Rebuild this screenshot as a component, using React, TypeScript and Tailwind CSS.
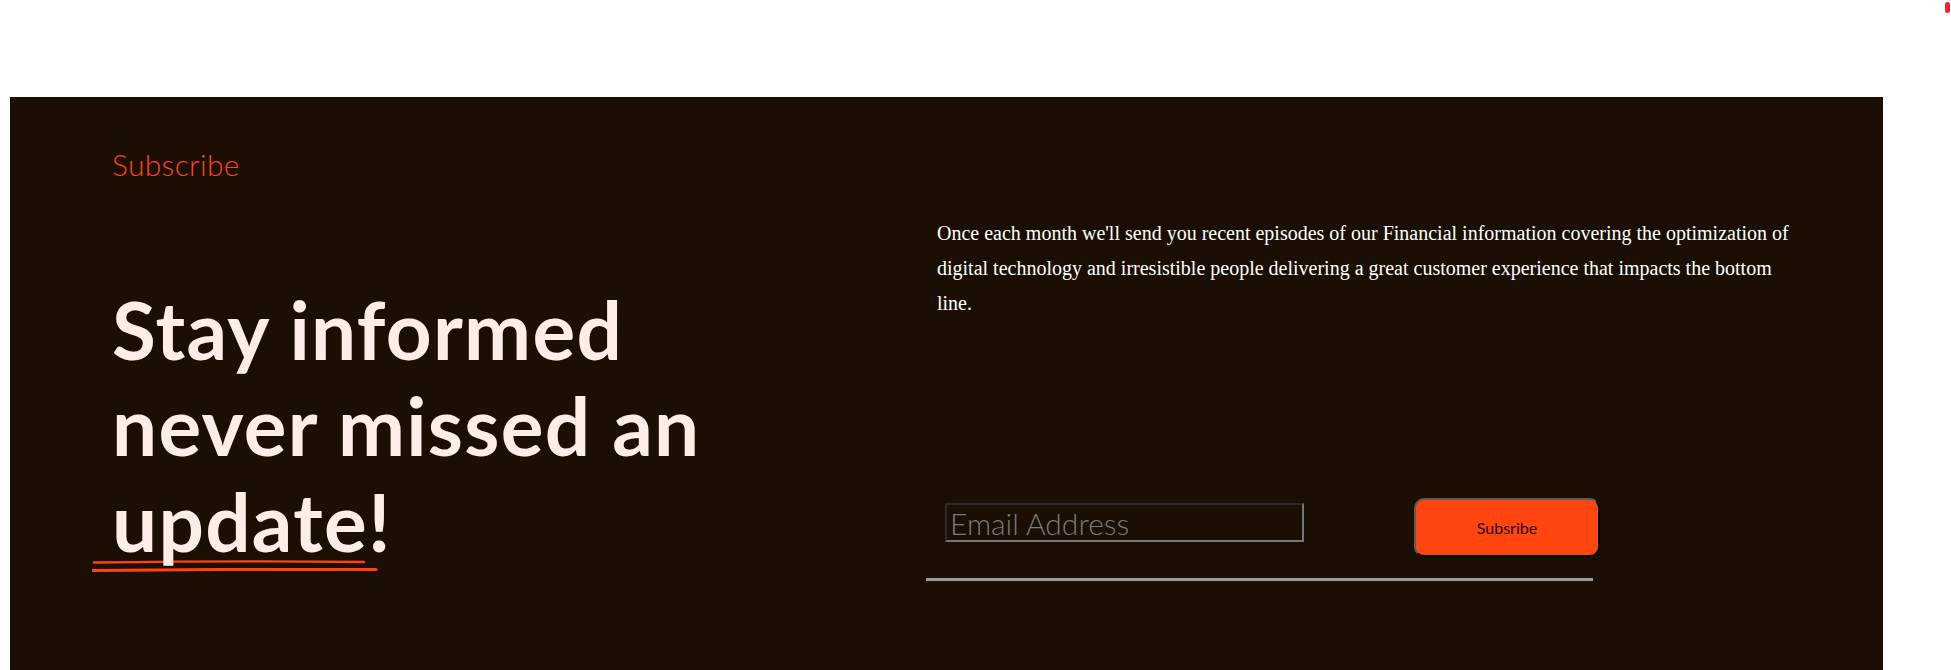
import React from "react";

const Underline = () => (
  <svg
    className="absolute left-[-20px] top-[86px] w-[290px] h-[16px] -z-10"
    viewBox="0 0 290 16"
    fill="none"
  >
    <path d="M2 3.5 C 80 2.5, 190 2, 272 3" stroke="#ff4410" strokeWidth="2.4" strokeLinecap="round" />
    <path d="M1 11.5 C 90 10.5, 200 10, 284 10.5" stroke="#ff4410" strokeWidth="3.2" strokeLinecap="round" />
  </svg>
);

export default function App() {
  return (
    <main className="relative min-h-[670px] bg-white overflow-hidden">
      <span className="absolute top-[2px] right-[1px] w-[5px] h-[11px] rounded-full bg-[#e8262b]" />
      <section className="ml-[10px] mt-[97px] w-[1873px] h-[573px] bg-[#1b0f03] flex">
        <div className="w-[916px] shrink-0 pl-[102px] pt-[49px]" style={{ fontFamily: "Lato, 'Noto Sans', sans-serif" }}>
          <p className="text-[30px] leading-[36px] font-light text-[#ff4410] tracking-[0.3px]">Subscribe</p>
          <h1 className="mt-[99px] text-[80px] leading-[96px] font-bold tracking-[1.3px] text-[#fdede6] isolate">
            Stay informed
            <br />
            never missed an
            <br />
            <span className="relative inline-block">
              update!
              <Underline />
            </span>
          </h1>
        </div>
        <div className="flex-1 flex flex-col pt-[119px]">
          <p
            className="ml-[11px] w-[870px] text-[20px] leading-[35px] text-white"
            style={{ fontFamily: "'Liberation Serif', 'Times New Roman', serif" }}
          >
            Once each month we'll send you recent episodes of our Financial information covering the optimization of
            digital technology and irresistible people delivering a great customer experience that impacts the bottom
            line.
          </p>
          <form
            className="mt-[177px] flex items-start"
            style={{ fontFamily: "Lato, 'Noto Sans', sans-serif" }}
            onSubmit={(e) => e.preventDefault()}
          >
            <input
              type="email"
              placeholder="Email Address"
              className="ml-[19px] mt-[5px] w-[359px] h-[39px] px-[3px] bg-transparent border-2 border-t-[#2b2b2b] border-l-[#2b2b2b] border-b-[#767676] border-r-[#767676] text-[30px] leading-[35px] font-light text-[#7a7a7a] placeholder:text-[#7a7a7a] outline-none"
            />
            <button
              type="submit"
              className="ml-[110px] w-[186px] h-[59px] rounded-[10px] bg-[#ff4611] border-2 border-t-[#5a5a5a] border-l-[#5a5a5a] border-b-black border-r-black text-[16px] text-[#2a0a00]"
            >
              Subsribe
            </button>
          </form>
          <div className="mt-[21px] w-[667px] h-[3px] bg-[#9b9b9b]" />
        </div>
      </section>
    </main>
  );
}
